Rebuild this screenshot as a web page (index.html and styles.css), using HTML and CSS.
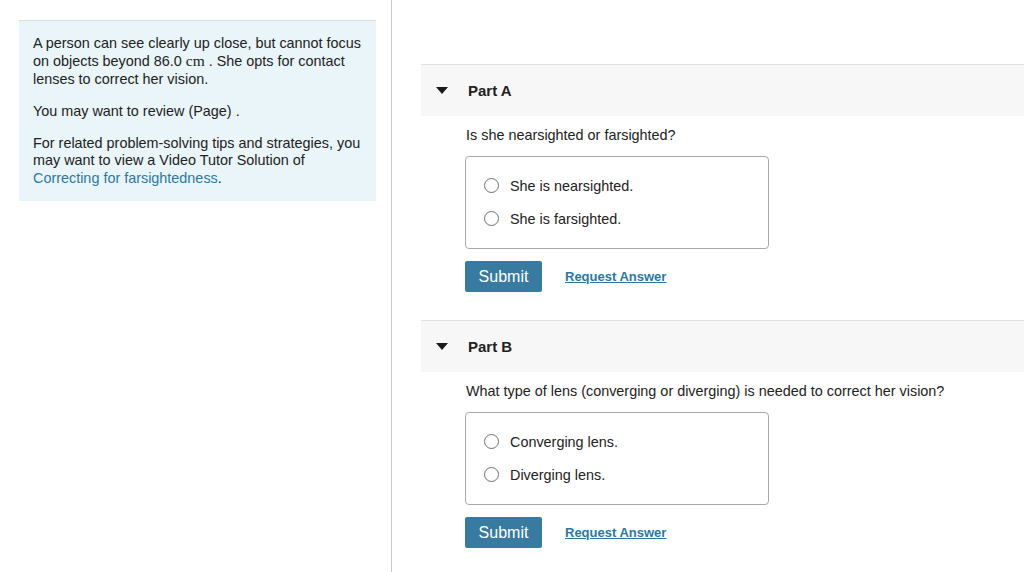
FILE: index.html
```html
<!DOCTYPE html>
<html>
<head>
<meta charset="utf-8">
<link rel="stylesheet" href="styles.css">
</head>
<body>
<div class="page">
  <aside class="left">
    <div class="intro">
      <p>A person can see clearly up close, but cannot focus on objects beyond 86.0 <span class="unit">cm</span> . She opts for contact lenses to correct her vision.</p>
      <p>You may want to review (Page) .</p>
      <p>For related problem-solving tips and strategies, you may want to view a Video Tutor Solution of <a class="link" href="#">Correcting for farsightedness</a>.</p>
    </div>
  </aside>
  <main class="right">
    <section class="part">
      <div class="part-head"><span class="tri"></span><span class="part-title">Part A</span></div>
      <div class="part-body">
        <p class="question">Is she nearsighted or farsighted?</p>
        <div class="options">
          <label class="opt"><span class="radio"></span>She is nearsighted.</label>
          <label class="opt"><span class="radio"></span>She is farsighted.</label>
        </div>
        <div class="actions">
          <button class="submit">Submit</button>
          <a class="req" href="#">Request Answer</a>
        </div>
      </div>
    </section>
    <section class="part">
      <div class="part-head"><span class="tri"></span><span class="part-title">Part B</span></div>
      <div class="part-body">
        <p class="question">What type of lens (converging or diverging) is needed to correct her vision?</p>
        <div class="options">
          <label class="opt"><span class="radio"></span>Converging lens.</label>
          <label class="opt"><span class="radio"></span>Diverging lens.</label>
        </div>
        <div class="actions">
          <button class="submit">Submit</button>
          <a class="req" href="#">Request Answer</a>
        </div>
      </div>
    </section>
  </main>
</div>
</body>
</html>
```
FILE: styles.css
```css
* { box-sizing: border-box; }
html, body { margin: 0; padding: 0; background: #fff; }
body {
  font-family: "Liberation Sans", Arial, Helvetica, sans-serif;
  font-size: 14.4px;
  color: #222;
  width: 1024px;
  height: 572px;
  overflow: hidden;
}
.page { display: flex; height: 572px; }
.left {
  width: 392px;
  flex: none;
  border-right: 1px solid #c5cbd3;
  padding: 20px 15px 0 19px;
}
.intro {
  background: #e9f5f8;
  border-top: 1px solid #d9dde0;
  padding: 14px 10px 14px 14px;
  line-height: 17.3px;
}
.intro p { margin: 0 0 15px 0; }
.intro p:last-child { margin-bottom: 0; }
.unit { font-family: "Liberation Serif", "Times New Roman", serif; font-size: 15.5px; }
.link { color: #2c79a5; text-decoration: none; }
.right { flex: 1; padding: 64px 0 0 29px; }
.part { margin-bottom: 28px; }
.part-head {
  height: 52px;
  background: #f7f7f7;
  border-top: 1px solid #e2e2e2;
  display: flex;
  align-items: center;
  padding-left: 15px;
}
.tri {
  width: 0; height: 0;
  border-left: 6px solid transparent;
  border-right: 6px solid transparent;
  border-top: 7px solid #1a1a1a;
  margin-right: 20px;
}
.part-title { font-weight: bold; font-size: 15px; color: #222; }
.part-body { padding-left: 44px; }
.question { margin: 11px 0 0 1px; line-height: 17px; color: #222; }
.options {
  margin-top: 12px;
  width: 304px;
  height: 93px;
  border: 1px solid #a9a9a9;
  border-radius: 4px;
  padding: 20px 0 0 18px;
  display: flex;
  flex-direction: column;
  gap: 16px;
}
.opt { display: flex; align-items: center; height: 17px; color: #222; }
.radio {
  width: 15px; height: 15px;
  border: 1px solid #707070;
  border-radius: 50%;
  margin-right: 11px;
  background: #fff;
}
.actions { margin-top: 12px; display: flex; align-items: center; }
.submit {
  width: 77px; height: 31px;
  background: #377ba0;
  color: #fff;
  border: none;
  border-radius: 2px;
  font-family: "Liberation Sans", Arial, sans-serif;
  font-size: 16px;
  padding: 0;
}
.req {
  margin-left: 23px;
  color: #2a77a3;
  font-weight: bold;
  font-size: 13px;
  text-decoration: underline;
}
```
